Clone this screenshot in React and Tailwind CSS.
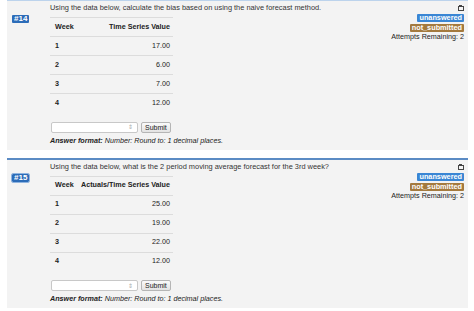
import React from "react";

const questions = [
  {
    num: "#14",
    text: "Using the data below, calculate the bias based on using the naive forecast method.",
    header: "Time Series Value",
    rows: ["17.00", "6.00", "7.00", "12.00"],
    first: true,
  },
  {
    num: "#15",
    text: "Using the data below, what is the 2 period moving average forecast for the 3rd week?",
    header: "Actuals/Time Series Value",
    rows: ["25.00", "19.00", "22.00", "12.00"],
    first: false,
  },
];

const PopIcon = () => (
  <svg width="6" height="6" viewBox="0 0 6 6" className="block">
    <rect x="0.5" y="1.5" width="5" height="4" fill="none" stroke="#444" strokeWidth="1" />
    <rect x="1" y="0" width="3" height="1.5" fill="#444" />
  </svg>
);

const Question = ({ q }) => (
  <div
    className={
      q.first
        ? "w-[461px] bg-[#f3f3f3] border-t border-[#bcd3ec] flex"
        : "w-[461px] bg-[#f3f3f3] border-t-2 border-[#5b8bc4] flex mt-[8px]"
    }
  >
    {/* number badge */}
    <div className="w-[43px] pl-[5px] pt-[3px]">
      <span
        className={
          q.first
            ? "inline-block bg-[#2c6cb8] text-white font-bold text-[8px] leading-[8px] px-[2px] rounded-[1px]"
            : "inline-block bg-[#2c6cb8] text-white font-bold text-[8px] leading-[8px] px-[2px] rounded-[1px] outline outline-[#8fb4e0]"
        }
      >
        {q.num}
      </span>
    </div>

    {/* question body */}
    <div className="flex-1 pt-[2px] pb-[4px]">
      <p className="text-[7.4px] leading-[10px] text-[#333]">{q.text}</p>
      <table className="mt-[4px] w-[123px] text-[7.2px] text-[#222] border-collapse">
        <thead>
          <tr className="border-t border-[#dcdcdc] h-[19px]">
            <th className="text-left font-bold pl-[5px] pr-[4px]">Week</th>
            <th className="text-right font-bold pr-[3px]">{q.header}</th>
          </tr>
        </thead>
        <tbody>
          {q.rows.map((v, i) => (
            <tr key={i} className="border-t border-[#dcdcdc] h-[19px]">
              <td className="text-left font-bold pl-[5px]">{i + 1}</td>
              <td className="text-right pr-[3px]">{v}</td>
            </tr>
          ))}
        </tbody>
      </table>
      <div className="mt-[9px] flex items-center gap-[3px] pl-[1px]">
        <div className="w-[87px] h-[11px] bg-white border border-[#c8c8c8] rounded-[2px] flex items-center justify-end pr-[4px]">
          <span className="text-[6px] leading-[6px] text-[#aaa]">⇕</span>
        </div>
        <button className="h-[11px] px-[3px] bg-gradient-to-b from-[#fafafa] to-[#e3e3e3] border border-[#b5b5b5] rounded-[2px] text-[7px] leading-[9px] text-[#222]">
          Submit
        </button>
      </div>
      <p className="mt-[3px] text-[7.2px] leading-[10px] italic text-[#222]">
        <span className="font-bold">Answer format:</span> Number: Round to: 1 decimal places.
      </p>
    </div>

    {/* status column */}
    <div className="flex flex-col items-end pr-[4px] pt-[3px]">
      <div className="h-[8px] flex items-center">
        <PopIcon />
      </div>
      <span className="mt-[2px] bg-[#3a86d4] text-white font-bold text-[7.3px] leading-[8px] px-[2px] rounded-[1px]">
        unanswered
      </span>
      <span className="mt-[2px] bg-[#a47a3e] text-white font-bold text-[7.3px] leading-[8px] px-[2px] rounded-[1px]">
        not_submitted
      </span>
      <span className="text-[7.2px] leading-[10px] text-[#222]">
        Attempts Remaining: 2
      </span>
    </div>
  </div>
);

export default function App() {
  return (
    <div
      className="w-[474px] h-[311px] bg-white pl-[7px] overflow-hidden"
      style={{ fontFamily: '"Liberation Sans", Arial, sans-serif' }}
    >
      {questions.map((q) => (
        <Question key={q.num} q={q} />
      ))}
    </div>
  );
}
